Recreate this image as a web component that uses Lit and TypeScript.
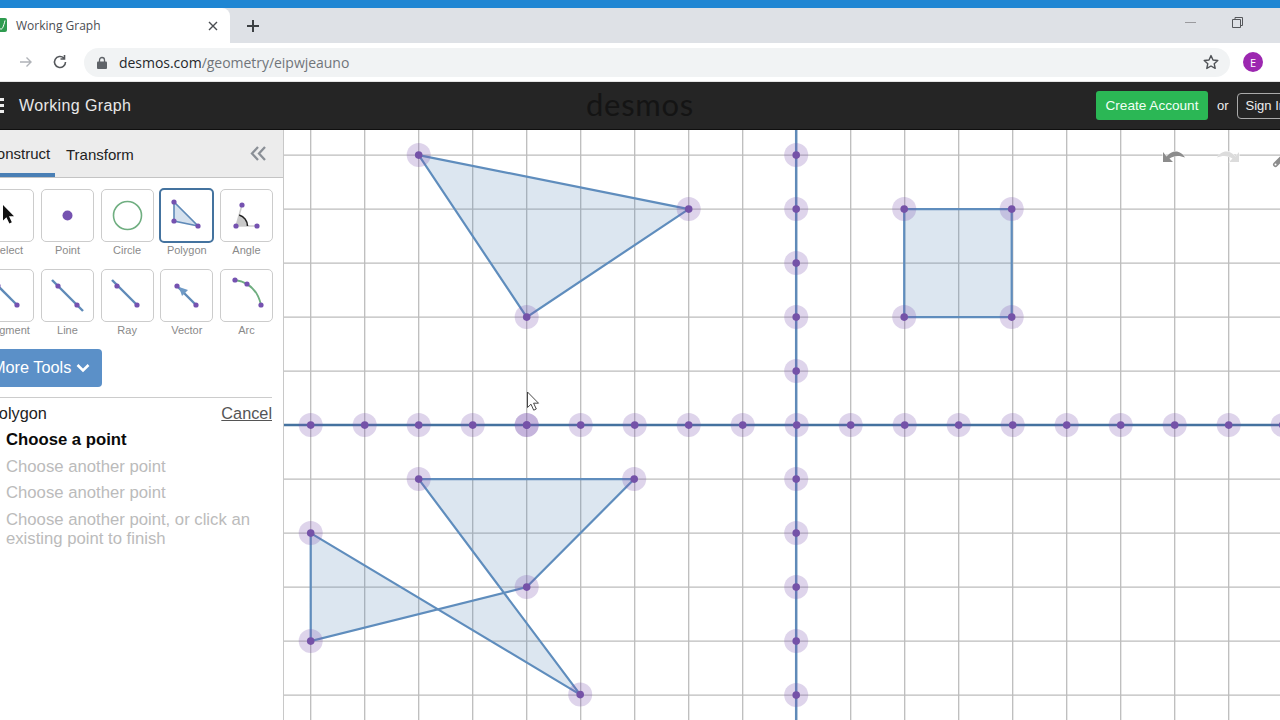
import { LitElement, html, css, svg } from "lit";
import { customElement } from "lit/decorators.js";

const GX = Array.from({ length: 19 }, (_, i) => 311.5 + i * 54);
const GY = Array.from({ length: 11 }, (_, i) => 155.5 + i * 54);
const AXX = 797;
const AXY = 425.5;
const PT = "#7552a8";

const pts: [number, number][] = [
  ...GX.map((x) => [x, AXY] as [number, number]),
  ...GY.filter((y) => y !== AXY).map((y) => [AXX, y] as [number, number]),
  [527.5, 425.5],
  [419.5, 155.5], [689.5, 209.5], [527.5, 317.5],
  [905, 209.5], [1012.5, 209.5], [1012.5, 317.5], [905, 317.5],
  [419.5, 479.5], [635, 479.5], [527.5, 587.5], [311.5, 641.5], [311.5, 533.5], [581, 695],
];

const polys = [
  "419.5,155.5 689.5,209.5 527.5,317.5",
  "905,209.5 1012.5,209.5 1012.5,317.5 905,317.5",
  "419.5,479.5 635,479.5 527.5,587.5 311.5,641.5 311.5,533.5 581,695",
];

const dot = (x: number, y: number, r = 3.2) => svg`<circle cx=${x} cy=${y} r=${r} fill="#7552b0"></circle>`;
const seg = (a: number, b: number, c: number, d: number) =>
  svg`<line x1=${a} y1=${b} x2=${c} y2=${d} stroke="#5f8ab8" stroke-width="2.4"></line>`;

const tools: { label: string; sel?: boolean; icon: unknown }[] = [
  { label: "Select", icon: svg`<path d="M22 16v15.500l3.400-3.300 3 6.300 2.400-1.200-2.800-6h5z" fill="#111"></path>` },
  { label: "Point", icon: dot(26.5, 26.5, 5) },
  { label: "Circle", icon: svg`<circle cx="26.5" cy="26.5" r="14" fill="none" stroke="#6fae80" stroke-width="1.6"></circle>` },
  {
    label: "Polygon", sel: true,
    icon: svg`<polygon points="14,13 14,32 38,37" fill="#d5e1ee" stroke="#5f8ab8" stroke-width="1.6"></polygon>${dot(14, 13, 2.6)}${dot(14, 32, 2.6)}${dot(38, 37, 2.6)}`,
  },
  {
    label: "Angle",
    icon: svg`<line x1="22" y1="16" x2="16" y2="37" stroke="#ccc" stroke-width="1.5"></line>
      <line x1="16" y1="37" x2="37" y2="37" stroke="#ccc" stroke-width="1.5"></line>
      <path d="M16 37 L19.2 26 A11.5 11.5 0 0 1 27.5 37z" fill="#c9c9c9"></path>
      <path d="M19.2 26 A11.5 11.5 0 0 1 27.5 37" fill="none" stroke="#222" stroke-width="1.6"></path>
      ${dot(22, 16, 2.6)}${dot(16, 37, 2.6)}${dot(37, 37, 2.6)}`,
  },
  { label: "Segment", icon: svg`${seg(17, 17, 36, 36)}${dot(17, 17, 2.6)}${dot(36, 36, 2.6)}` },
  { label: "Line", icon: svg`${seg(11, 11, 42, 42)}${dot(17, 17, 2.6)}${dot(36, 36, 2.6)}` },
  { label: "Ray", icon: svg`${seg(11, 11, 36, 36)}${dot(16, 17, 2.6)}${dot(36, 36, 2.6)}` },
  {
    label: "Vector",
    icon: svg`${seg(17, 17, 36, 36)}<polygon points="19,18 28,21 22,27" fill="#6f9ac6"></polygon>${dot(17, 17, 2.6)}${dot(36, 36, 2.6)}`,
  },
  {
    label: "Arc",
    icon: svg`<path d="M15 11 Q36 14 41 36" fill="none" stroke="#6fae80" stroke-width="1.8"></path>${dot(15, 11, 2.6)}${dot(27, 15, 2.6)}${dot(41, 36, 2.6)}`,
  },
];

@customElement("app-root")
export class AppRoot extends LitElement {
  static styles = css`
    :host { display: block; width: 1280px; height: 720px; overflow: hidden; background: #fff;
      font-family: "Liberation Sans", Arial, sans-serif; }
    .page { display: flex; flex-direction: column; width: 1280px; height: 720px; overflow: hidden; }
    .blue { height: 8px; background: #1f86d3; flex: none; }
    .strip { height: 35px; flex: none; background: #dee1e6; display: flex; align-items: center; }
    .tab { width: 230px; height: 35px; background: #fff; border-top-right-radius: 8px; display: flex;
      align-items: center; box-sizing: border-box; padding-right: 12px; flex: none; }
    .fav { width: 7px; height: 14px; flex: none; display: block; margin-top: -1px; }
    .tabtitle { margin-left: 9px; flex: 1; font: 12px "Open Sans", "Noto Sans", sans-serif; color: #4a4d52; margin-top: -1px; }
    .plus { margin-left: 16px; width: 14px; height: 14px; flex: none; }
    .winbtns { margin-left: auto; display: flex; align-items: center; gap: 36px; padding-right: 37px; margin-top: -6px; }
    .toolbar { height: 38px; flex: none; background: #fff; display: flex; align-items: center; padding-left: 19px; box-sizing: border-box; }
    .fwd { width: 14px; height: 14px; flex: none; }
    .reload { width: 16px; height: 16px; margin-left: 19px; flex: none; }
    .omni { margin-left: 16px; width: 1146px; height: 29px; background: #f1f3f4; border-radius: 15px; display: flex;
      align-items: center; box-sizing: border-box; padding: 0 11px 0 13px; flex: none; }
    .lock { width: 10px; height: 13px; flex: none; }
    .url { margin-left: 12px; font: 14px "Open Sans", "Noto Sans", sans-serif; letter-spacing: -.03px; color: #70757a; flex: 1; }
    .url b { font-weight: 400; color: #26282b; }
    .star { width: 16px; height: 16px; flex: none; }
    .avatar { margin-left: 13px; width: 20px; height: 20px; border-radius: 50%; background: #9c27b0; color: #fff;
      font: 11px "Open Sans", sans-serif; display: flex; align-items: center; justify-content: center; flex: none; }
    .rule { height: 1px; flex: none; background: #e4e4e4; }
    .header { height: 47px; flex: none; background: #252525; border-bottom: 1px solid #0f0f0f;
      display: flex; align-items: center; position: relative; }
    .burger { display: flex; flex-direction: column; gap: 3px; width: 4px; flex: none; }
    .burger i { display: block; height: 3px; width: 4px; background: #eee; }
    .title { margin-left: 15px; margin-top: 1px; font-size: 16px; letter-spacing: .38px; color: #e8e8e8; flex: none; }
    .logo { position: absolute; left: 0; right: 0; top: 4px; text-align: center; font: 400 31px/36px Lato, sans-serif;
      letter-spacing: .7px; color: #141414; }
    .hright { margin-left: auto; display: flex; align-items: center; flex: none; width: 184px; }
    .create { width: 112px; height: 29px; background: #2bb755; border-radius: 3px; color: #f2fff5; font-size: 13.6px;
      display: flex; align-items: center; justify-content: center; flex: none; }
    .or { margin-left: 9px; font-size: 13px; color: #eee; flex: none; }
    .signin { margin-left: 8px; flex: none; width: 60px; height: 26px; border: 1px solid #aaa; border-radius: 4px; box-sizing: border-box;
      color: #eee; font-size: 13px; display: flex; align-items: center; padding-left: 8px; white-space: nowrap; }
    .main { flex: 1; display: flex; min-height: 0; }
    .panel { width: 284px; flex: none; border-right: 1px solid #c8c8c8; box-sizing: border-box; overflow: hidden; background: #fff; }
    .tabs { height: 48px; box-sizing: border-box; background: #ececec; border-bottom: 1px solid #c4c4c4; display: flex; align-items: center; padding-bottom: 1px; }
    .t1 { margin-left: -14px; width: 69px; height: 47px; box-sizing: border-box; border-bottom: 4px solid #4a7fb5; display: flex; align-items: center; font-size: 15px; color: #222; flex: none; padding-top: 5px; }
    .t2 { margin-left: 11px; margin-top: 2px; font-size: 15px; color: #222; flex: none; }
    .collapse { margin-left: auto; margin-right: 16px; margin-top: 1px; width: 17px; height: 17px; flex: none; }
    .tools { display: grid; grid-template-columns: repeat(5, 53px); column-gap: 6.67px; margin-left: -18.7px; padding-top: 11px; }
    .tool { height: 80px; display: flex; flex-direction: column; align-items: center; }
    .box { width: 53px; height: 53px; box-sizing: border-box; border: 1px solid #ccc; border-radius: 5px; flex: none; }
    .box svg { display: block; margin: -1px; width: 53px; height: 53px; }
    .tool.sel .box { width: 55px; height: 55px; margin: -1px 0; border: 2px solid #44739f; }
    .tool.sel .box svg { margin: -1px 0 0 -1px; }
    .lab { margin-top: 1px; font-size: 11px; line-height: 14px; color: #8a8a8a; white-space: nowrap; }
    .more { margin-left: -19px; width: 121px; height: 38px; background: #5b90c8; border-radius: 4px; color: #fff; font-size: 16.3px;
      display: flex; align-items: center; box-sizing: border-box; padding: 0 0 1px 11px; gap: 5px; white-space: nowrap; }
    .more svg { width: 14px; height: 10px; flex: none; }
    .steps { margin: 10px 11px 0 -12px; border-top: 1px solid #ccc; }
    .shead { display: flex; justify-content: space-between; align-items: baseline; padding-top: 6px; font-size: 16.3px; line-height: 19px; color: #222; }
    .cancel { color: #555; text-decoration: underline; }
    .step { margin-left: 18px; font-size: 16.7px; line-height: 19.5px; color: #bbb; padding-top: 7px; }
    .step.now { color: #0a0a0a; font-weight: 700; }
    .canvas { flex: 1; position: relative; min-width: 0; overflow: hidden; }
    .canvas > svg { display: block; width: 996px; height: 590px; }
  `;

  render() {
    return html`<div class="page">
      <div class="blue"></div>
      <div class="strip">
        <div class="tab">
          <svg class="fav" viewBox="0 0 7 14"><rect x="-4" width="11" height="14" rx="2" fill="#2e9b4f"></rect><path d="M0 10.500c1.500 1.500 3 .5 5-8" fill="none" stroke="#fff" stroke-width="1"></path></svg>
          <div class="tabtitle">Working Graph</div>
          <svg width="10" height="10" viewBox="0 0 10 10"><path d="M1 1l8 8M9 1l-8 8" stroke="#4a4d52" stroke-width="1.4"></path></svg>
        </div>
        <svg class="plus" viewBox="0 0 14 14"><path d="M7 1v12M1 7h12" stroke="#3c4043" stroke-width="2"></path></svg>
        <div class="winbtns">
          <svg width="11" height="2" viewBox="0 0 11 2"><rect width="11" height="1" fill="#9a9a9e"></rect></svg>
          <svg width="11" height="11" viewBox="0 0 11 11"><path d="M3 2.500V.5h7.500v8h-2M.5 2.500h8v8h-8z" fill="none" stroke="#55575b"></path></svg>
        </div>
      </div>
      <div class="toolbar">
        <svg class="fwd" viewBox="0 0 14 14"><path d="M1 7h11M7.500 2.500L12 7l-4.500 4.500" fill="none" stroke="#b0b3b8" stroke-width="1.400"></path></svg>
        <svg class="reload" viewBox="0 0 16 16"><path d="M13.500 8a5.500 5.500 0 1 1-1.700-4M12.500 1v4h-4" fill="none" stroke="#55585c" stroke-width="1.600"></path></svg>
        <div class="omni">
          <svg class="lock" viewBox="0 0 10 13"><path d="M2.500 6V4a2.500 2.500 0 0 1 5 0v2" fill="none" stroke="#5f6368" stroke-width="1.300"></path><rect y="5.500" width="10" height="7.500" rx="1" fill="#5f6368"></rect></svg>
          <div class="url"><b>desmos.com</b>/geometry/eipwjeauno</div>
          <svg class="star" viewBox="0 0 16 16"><path d="M8 1.600l2 4.400 4.800.5-3.600 3.200 1 4.700L8 12l-4.200 2.400 1-4.700L1.200 6.500 6 6z" fill="none" stroke="#4f5256" stroke-width="1.400" stroke-linejoin="round"></path></svg>
        </div>
        <div class="avatar">E</div>
      </div>
      <div class="rule"></div>
      <div class="header">
        <div class="burger"><i></i><i></i><i></i></div>
        <div class="title">Working Graph</div>
        <div class="logo">desmos</div>
        <div class="hright">
          <div class="create">Create Account</div>
          <div class="or">or</div>
          <div class="signin">Sign In</div>
        </div>
      </div>
      <div class="main">
        <div class="panel">
          <div class="tabs">
            <div class="t1">Construct</div>
            <div class="t2">Transform</div>
            <svg class="collapse" viewBox="0 0 17 17"><path d="M8 2L2 8.500 8 15M15 2L9 8.500 15 15" fill="none" stroke="#8a8f96" stroke-width="2.300"></path></svg>
          </div>
          <div class="tools">
            ${tools.map(
              (t) => html`<div class="tool ${t.sel ? "sel" : ""}">
                <div class="box"><svg viewBox="0 0 53 53">${t.icon}</svg></div>
                <div class="lab">${t.label}</div>
              </div>`
            )}
          </div>
          <div class="more">More Tools
            <svg viewBox="0 0 14 10"><path d="M1.500 2L7 7.500 12.500 2" fill="none" stroke="#fff" stroke-width="2.600"></path></svg>
          </div>
          <div class="steps">
            <div class="shead"><span>Polygon</span><span class="cancel">Cancel</span></div>
            <div class="step now">Choose a point</div>
            <div class="step">Choose another point</div>
            <div class="step">Choose another point</div>
            <div class="step">Choose another point, or click an existing point to finish</div>
          </div>
        </div>
        <div class="canvas">
          <svg viewBox="284 130 996 590">
            <g transform="translate(-0.8 -0.4)">
              ${GX.filter((x) => x !== AXX + 0.5).map((x) => svg`<line x1=${x} y1="130" x2=${x} y2="721" stroke="#bcbcbc" stroke-width="1.300"></line>`)}
              ${GY.filter((y) => y !== AXY).map((y) => svg`<line x1="284" y1=${y} x2="1281" y2=${y} stroke="#bcbcbc" stroke-width="1.300"></line>`)}
              <line x1="284" y1=${AXY} x2="1281" y2=${AXY} stroke="#44729f" stroke-width="2.500"></line>
              <line x1=${AXX} y1="130" x2=${AXX} y2="721" stroke="#5f8ab8" stroke-width="2.500"></line>
              ${polys.map((p) => svg`<polygon points=${p} fill="#4f81b5" fill-opacity=".2" fill-rule="nonzero" stroke="#5f8dbd" stroke-width="2.200"></polygon>`)}
              ${pts.map(([x, y]) => svg`<circle cx=${x} cy=${y} r="12" fill="#7a55b0" fill-opacity=".25"></circle><circle cx=${x} cy=${y} r="3.800" fill=${PT}></circle>`)}
            </g>
            <path d="M527.500 392v15.500l3.500-3.300 2.700 6 2.600-1.200-2.700-5.800h4.900z" fill="#fff" stroke="#333" stroke-width=".9"></path>
            <path d="M1163 152v10h10l-3.500-3.500c4-3 10-3.500 15.500-1-3.500-6.500-12-9-18.500-1z" fill="#8c8c8c" stroke="#fff" stroke-width="1" paint-order="stroke"></path>
            <path d="M1239 152v10h-10l3.500-3.500c-4-3-10-3.500-15.500-1 3.500-6.500 12-9 18.500-1z" fill="#dcdcdc" stroke="#fff" stroke-width="1" paint-order="stroke"></path>
            <path d="M1275.500 164.500L1283 157" stroke="#8c8c8c" stroke-width="5" stroke-linecap="round"></path>
            <circle cx="1275.500" cy="164.500" r="1" fill="#fff"></circle>
          </svg>
        </div>
      </div>
    </div>`;
  }
}
